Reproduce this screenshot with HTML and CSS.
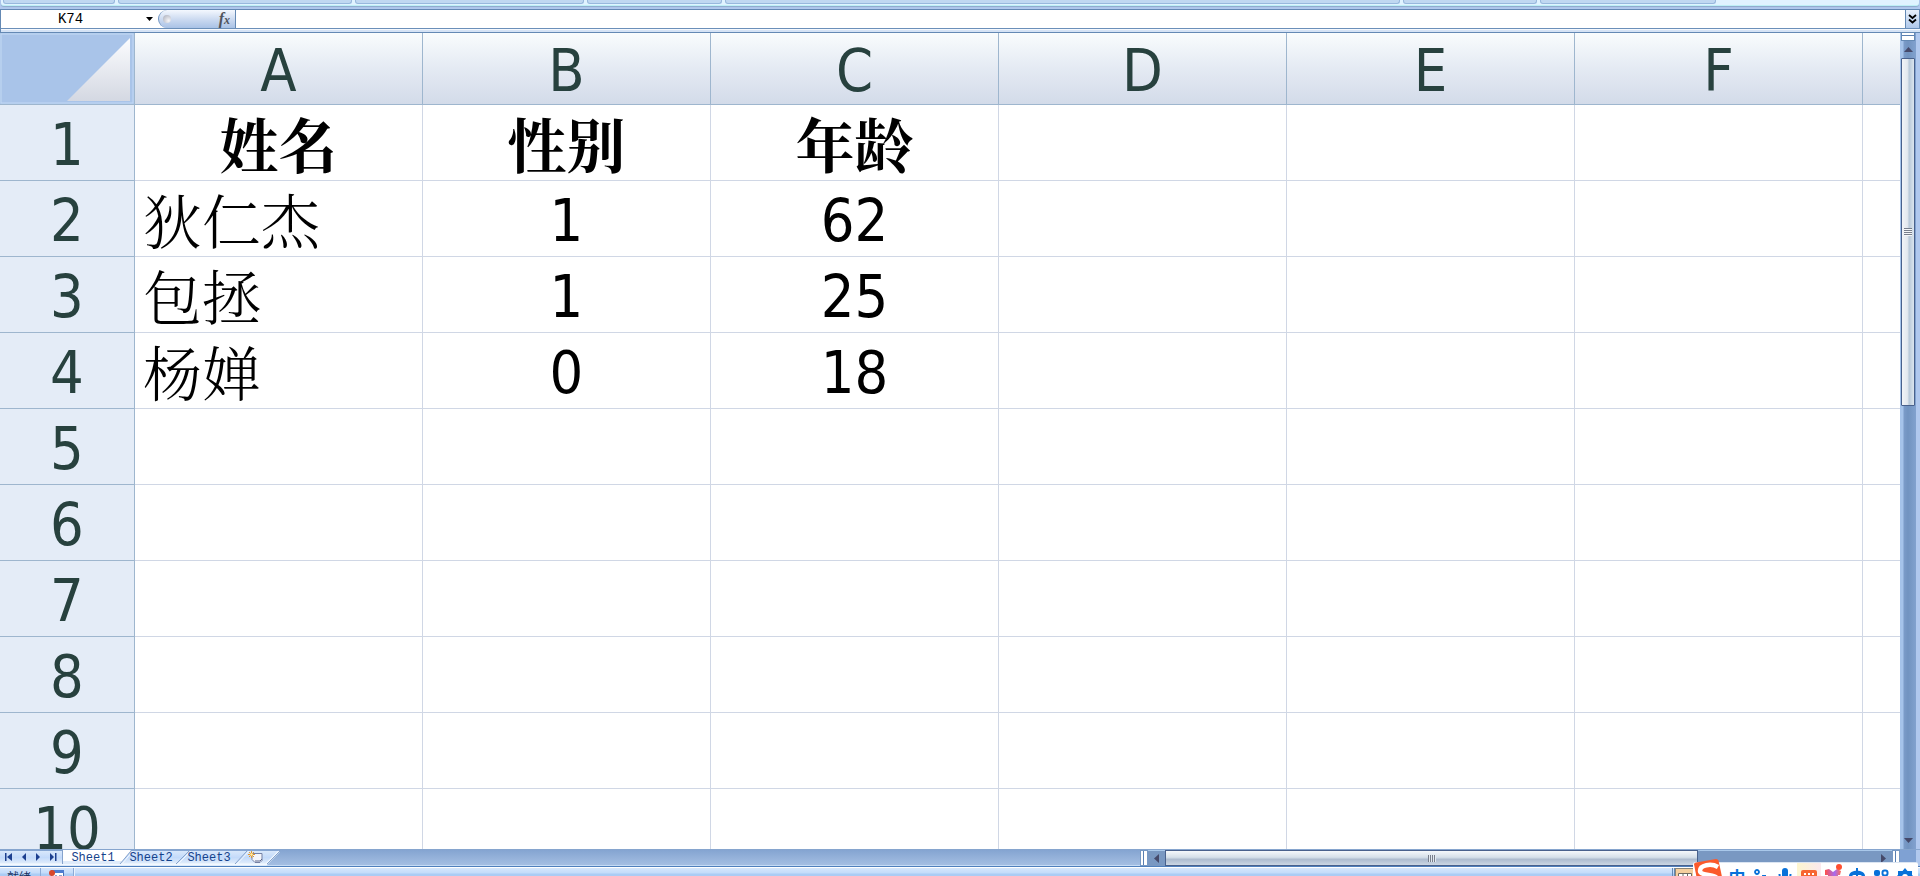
FILE: index.html
```html
<!DOCTYPE html>
<html lang="zh-CN">
<head>
<meta charset="utf-8">
<title>Sheet1</title>
<link rel="stylesheet" href="styles.css">
</head>
<body>
<header class="ribbon">
  <div class="group g-1"></div><div class="group g-2"></div><div class="group g-3"></div><div class="group g-4"></div><div class="group g-5"></div><div class="group g-6"></div><div class="group g-7"></div>
</header>
<div class="formula-bar">
  <input class="name-box" type="text" value="K74" aria-label="Name box">
  <button class="name-drop" aria-label="Names"><svg width="7" height="4" viewBox="0 0 7 4"><path d="M0 0h7L3.500 4z"/></svg></button>
  <div class="fx-area">
    <span class="knob"></span>
    <button class="fx" aria-label="Insert function"><i>f</i><i class="fx-x">x</i></button>
  </div>
  <input class="formula" type="text" aria-label="Formula">
  <button class="expand" aria-label="Expand formula bar"><svg width="9" height="10" viewBox="0 0 9 10"><path d="M1 1l3.500 3L8 1M1 5.500l3.500 3L8 5.500" fill="none" stroke="#000" stroke-width="1.800"/></svg></button>
</div>
<main class="workspace">
  <div class="sheet">
    <table class="grid">
      <colgroup><col class="col-head"><col class="col"><col class="col"><col class="col"><col class="col"><col class="col"><col class="col"><col></colgroup>
      <thead>
        <tr>
          <th class="corner"><svg viewBox="0 0 134 71" width="134" height="71"><defs><linearGradient id="tri" x1="0" y1="0" x2="0" y2="1"><stop offset="0" stop-color="#fbfcfe"/><stop offset="1" stop-color="#d4d8e2"/></linearGradient></defs><rect x="1" y="1" width="132" height="69" fill="#a9c4e9" stroke="#c3d9f4" stroke-width="1"/><path d="M130 5v63H67z" fill="url(#tri)"/></svg></th>
          <th>A</th><th>B</th><th>C</th><th>D</th><th>E</th><th>F</th><th></th>
        </tr>
      </thead>
      <tbody>
        <tr class="titles"><th>1</th><td>姓名</td><td>性别</td><td>年龄</td><td></td><td></td><td></td><td></td></tr>
        <tr><th>2</th><td class="name">狄仁杰</td><td>1</td><td>62</td><td></td><td></td><td></td><td></td></tr>
        <tr><th>3</th><td class="name">包拯</td><td>1</td><td>25</td><td></td><td></td><td></td><td></td></tr>
        <tr><th>4</th><td class="name">杨婵</td><td>0</td><td>18</td><td></td><td></td><td></td><td></td></tr>
        <tr><th>5</th><td></td><td></td><td></td><td></td><td></td><td></td><td></td></tr>
        <tr><th>6</th><td></td><td></td><td></td><td></td><td></td><td></td><td></td></tr>
        <tr><th>7</th><td></td><td></td><td></td><td></td><td></td><td></td><td></td></tr>
        <tr><th>8</th><td></td><td></td><td></td><td></td><td></td><td></td><td></td></tr>
        <tr><th>9</th><td></td><td></td><td></td><td></td><td></td><td></td><td></td></tr>
        <tr><th>10</th><td></td><td></td><td></td><td></td><td></td><td></td><td></td></tr>
      </tbody>
    </table>
  </div>
  <div class="vscroll">
    <div class="v-split"></div>
    <button class="v-btn" aria-label="Scroll up"><svg width="9" height="5" viewBox="0 0 9 5"><path d="M0 5h9L4.500 0z"/></svg></button>
    <div class="v-track"><div class="v-thumb"><span class="v-grip"></span></div></div>
    <button class="v-btn" aria-label="Scroll down"><svg width="9" height="5" viewBox="0 0 9 5"><path d="M0 0h9L4.500 5z"/></svg></button>
  </div>
</main>
<div class="tab-row">
  <nav class="tabs">
    <svg class="tabs-art" width="282" height="16" viewBox="0 0 282 16" aria-hidden="true">
      <defs><linearGradient id="tab" x1="0" y1="0" x2="0" y2="1"><stop offset="0" stop-color="#d9e8fb"/><stop offset=".5" stop-color="#c3dafa"/><stop offset="1" stop-color="#e3eefb"/></linearGradient></defs>
      <path d="M0 1h279l-13 13H0z" fill="url(#tab)"/>
      <path d="M0 14.500h266l13-13" fill="none" stroke="#f4f9ff" stroke-width="2"/>
      <path d="M63 0h68l-11 14H63z" fill="#fff"/>
      <path d="M63 11h59l-2 3H63z" fill="#dfebfa"/>
      <path d="M62.500 0v14M131 1l-11 13M189 1l-13 13M247 1l-12 13M280 1l-13 13" fill="none" stroke="#86a3cc"/>
      <path d="M133 1l-11 13M191 1l-13 13M249 1l-12 13" fill="none" stroke="#f2f8ff"/>
    </svg>
    <div class="tab-nav">
      <button aria-label="First sheet"><svg width="8" height="8" viewBox="0 0 8 8"><path d="M0 0h1.500v8H0zM7 0v8L2 4z"/></svg></button>
      <button aria-label="Previous sheet"><svg width="8" height="8" viewBox="0 0 8 8"><path d="M6 0v8L2 4z"/></svg></button>
      <button aria-label="Next sheet"><svg width="8" height="8" viewBox="0 0 8 8"><path d="M2 0v8l4-4z"/></svg></button>
      <button aria-label="Last sheet"><svg width="8" height="8" viewBox="0 0 8 8"><path d="M6 0h1.500v8H6zM1 0v8l4-4z"/></svg></button>
    </div>
    <button class="tab">Sheet1</button>
    <button class="tab">Sheet2</button>
    <button class="tab">Sheet3</button>
    <button class="new-tab" aria-label="Insert sheet"><svg width="15" height="13" viewBox="0 0 15 13"><path d="M4 2.500h10v7l-2 2H7l-3-3z" fill="#f3f5fb" stroke="#7581a5"/><path d="M7 10h5l2-2" fill="none" stroke="#5c678c"/><path d="M3.500 0v7M0 3.500h7M1 1l5 5M6 1L1 6" stroke="#e59a2f"/><circle cx="3.500" cy="3.500" r="1.200" fill="#fff3b0"/></svg></button>
  </nav>
  <div class="hscroll">
    <div class="h-split"></div>
    <button class="h-btn" aria-label="Scroll left"><svg width="5" height="9" viewBox="0 0 5 9"><path d="M5 0v9L0 4.500z"/></svg></button>
    <div class="h-track"><div class="h-thumb"><span class="h-grip"></span></div></div>
    <button class="h-btn" aria-label="Scroll right"><svg width="5" height="9" viewBox="0 0 5 9"><path d="M0 0v9l5-4.500z"/></svg></button>
    <div class="h-split"></div>
  </div>
  <div class="size-box"></div>
</div>
<footer class="status">
  <span class="ready">就绪</span>
  <button class="macro" aria-label="Record macro"><svg width="16" height="14" viewBox="0 0 16 14"><rect x="2.500" y=".5" width="12" height="13" fill="#fff" stroke="#4b6fb3"/><path d="M2 0h13v3H2z" fill="#4d7cd0"/><path d="M6 5h2v2H6zM10 5h3v2h-3z" fill="#8fa6cf"/><circle cx="3" cy="3" r="3" fill="#d9472b"/></svg></button>
  <div class="status-fill"></div>
  <button class="view" aria-label="Normal view"><svg width="14" height="10" viewBox="0 0 14 10"><path d="M.5.500h13v9H.5zM.5 4.500h13M5 0v9M9.500 0v9" fill="#fff" stroke="#6f6a62"/></svg></button>
  <div class="view-rest"></div>
</footer>
<aside class="ime">
  <svg class="ime-logo" width="32" height="32" viewBox="0 0 32 32" aria-hidden="true"><path d="M1 5q0-1 2-1.500L23 0q2 0 2.500 1.500L31 27 6 31z" fill="#fb5a2b"/><path d="M25 8C18 4 7 6 7 12c0 5 17 3 17 8 0 4-9 5-15 2" fill="none" stroke="#fff" stroke-width="4.500"/></svg>
  <button class="ime-lang">中</button>
  <button aria-label="Punctuation"><svg width="18" height="18" viewBox="0 0 18 18"><circle cx="5" cy="4" r="2" fill="none" stroke="#0871d9" stroke-width="1.800"/><path d="M10 7h4v3l-3 4" fill="#0871d9"/></svg></button>
  <button aria-label="Voice"><svg width="18" height="18" viewBox="0 0 18 18"><rect x="6" y="0" width="6" height="10" rx="3" fill="#0871d9"/><path d="M3.500 6c0 8 11 8 11 0M9 12v4" fill="none" stroke="#0871d9" stroke-width="2"/></svg></button>
  <button class="ime-keys" aria-label="Keyboard"><svg width="18" height="18" viewBox="0 0 18 18"><rect x="1" y="2" width="16" height="14" rx="2" fill="#f76532"/><path d="M4 5h2v2H4zM8 5h2v2H8zM12 5h2v2h-2zM4 8h2v2H4zM8 8h2v2H8zM12 8h2v2h-2zM5 12h8v2H5z" fill="#fff"/></svg></button>
  <button aria-label="Skin"><svg class="skin" width="18" height="20" viewBox="0 0 18 20"><defs><linearGradient id="skin"><stop offset="0" stop-color="#ff5148"/><stop offset=".6" stop-color="#a66bf0"/><stop offset="1" stop-color="#ff6a55"/></linearGradient></defs><path d="M1 6l4-1 4 3 4-3 4 2-1 4h-2v8H4v-8H1z" fill="url(#skin)"/><circle cx="15" cy="3" r="3" fill="#ff5030"/></svg></button>
  <button aria-label="Assistant"><svg width="18" height="18" viewBox="0 0 18 18"><path d="M8 0h2v3H8z" fill="#0871d9"/><path d="M1 8c0-7 16-7 16 0v4c-1 5-15 5-16 0z" fill="#0871d9"/><rect x="4" y="7" width="10" height="5" rx="2" fill="#fff"/><path d="M8 4h2v5H8z" fill="#0871d9"/></svg></button>
  <button aria-label="Toolbox"><svg width="18" height="18" viewBox="0 0 18 18"><rect x="2" y="2" width="6" height="6" rx="2" fill="#0871d9"/><rect x="10.500" y="2.500" width="5" height="5" rx="2" fill="none" stroke="#0871d9" stroke-width="2"/><rect x="2" y="10" width="6" height="6" rx="2" fill="#0871d9"/><rect x="10" y="10" width="6" height="6" rx="2" fill="#0871d9"/></svg></button>
  <button aria-label="Settings"><svg width="18" height="18" viewBox="0 0 18 18"><path d="M9 0l2.500 3H16v4l2 2-2 2v4h-4l-3 3-3-3H2v-4L0 9l2-2V3h4.500z" fill="#0871d9"/><circle cx="9" cy="9" r="3" fill="#fff"/></svg></button>
</aside>
</body>
</html>
```
FILE: styles.css
```css
* { box-sizing: border-box; }
body {
  margin: 0;
  height: 100vh;
  display: flex;
  flex-direction: column;
  position: relative;
  overflow: hidden;
  background: #b0c8ee;
  font-family: "Liberation Sans", "Noto Sans CJK SC", sans-serif;
}
button, input { margin: 0; padding: 0; border: 0; background: none; border-radius: 0; outline: 0; }
button { display: flex; align-items: center; justify-content: center; }
svg { display: block; flex: none; }

.ribbon {
  flex: 0 0 6px;
  margin: 0 1px 3px;
  padding: 0 2px 1px;
  display: flex;
  gap: 3px;
  background: #e0f3ff;
  border-bottom: 1px solid #bdf0f6;
  border-radius: 0 0 3px 3px;
  box-shadow: 0 1px 1px #8ea9ca;
}
.group { background: #c0d8f1; border: 1px solid #98b8dc; border-top: 0; border-radius: 0 0 3px 3px; height: 4px; }
.g-1 { width: 112px; }
.g-2 { width: 234px; }
.g-3 { width: 229px; }
.g-4 { width: 135px; }
.g-5 { width: 675px; }
.g-6 { width: 134px; }
.g-7 { width: 176px; }

.formula-bar {
  flex: 0 0 24px;
  display: flex;
  height: 24px;
  background: linear-gradient(#fff 0 18px, #6b8fb9 18px 19px, #f4f8fe 19px 20px, #d5e3f5 20px);
  border: 1px solid #6489b4;
  border-width: 1px 0 1px 1px;
  padding-bottom: 4px;
}
.name-box { width: 139px; height: 18px; text-align: center; font: 14px/18px "Liberation Mono", monospace; color: #000; }
.name-drop { width: 18px; height: 18px; }
.fx-area {
  width: 78px;
  height: 18px;
  display: flex;
  align-items: center;
  justify-content: space-between;
  padding: 0 5px 0 4px;
  background: linear-gradient(#f4f8fe, #cddbf1 50%, #a9c2e6);
  border-left: 1px solid #6f94c2;
  border-right: 1px solid #6489b4;
  border-radius: 9px 0 0 9px;
}
.knob { width: 8px; height: 8px; border-radius: 50%; background: radial-gradient(circle at 70% 70%, #f5f5f8, #a7abb8); }
.fx { font: bold 16px/16px "Liberation Serif", serif; color: #50545c; }
.fx-x { font-size: 12px; padding-top: 2px; }
.formula { flex: 1; height: 18px; }
.expand { width: 15px; height: 18px; background: linear-gradient(#e8f0fb, #afc8ea); border: 1px solid #6489b4; border-width: 0 1px 0 1px; }

.workspace { flex: 1; min-height: 0; display: flex; padding-right: 4px; }
.sheet { flex: 1; min-width: 0; overflow: hidden; background: #fff; }
.grid { width: 100%; table-layout: fixed; border-collapse: separate; border-spacing: 0; }
.col-head { width: 135px; }
.col { width: 288px; }
.grid th, .grid td {
  height: 76px;
  padding: 4px 0 0;
  border: solid #d0d7e5;
  border-width: 0 1px 1px 0;
  font: 59px/71px "DejaVu Sans Condensed", "Noto Sans", "Noto Sans CJK SC", sans-serif;
  text-align: center;
  white-space: nowrap;
  color: #000;
}
.grid th { color: #27413e; background: #e4ecf7; border-color: #9eb6ce; }
.grid thead th { height: 72px; line-height: 67px; background: linear-gradient(#f9fcfd, #e4eaf3 50%, #d3dbe9); }
.grid thead .corner { padding: 0; background: #a9c4e9; }
.grid td:last-child, .grid th:last-child { border-right: 0; }
.grid .titles td, .grid .name {
  padding-top: 0;
  font-family: "SimSun", "Noto Serif CJK SC", "Noto Sans CJK SC", serif;
}
.grid .titles td { font-weight: 700; }
.grid .name { font-weight: 300; text-align: left; padding-left: 8px; }

.vscroll {
  width: 16px;
  display: flex;
  flex-direction: column;
  background: linear-gradient(90deg, #a5c3ea 0 3px, #7b9bc8 4px, #7193c0 50%, #82a2cf);
  fill: #45496a;
}
.v-split { height: 8px; margin: 0 1px; background: linear-gradient(#fff 0 2px, #5a80b2 2px 3px, #fff 3px); border: 1px solid #6489b4; border-top: 0; }
.v-btn { height: 17px; }
.v-track { flex: 1; display: flex; flex-direction: column; }
.v-thumb { height: 45%; margin: 0 1px; display: flex; align-items: center; justify-content: center; border: 1px solid #49618c; border-radius: 1px; background: linear-gradient(90deg, #f2f4f7, #e3e8ee 45%, #b9c9d9 60%, #dce6ef); }
.v-grip { width: 8px; height: 8px; background: repeating-linear-gradient(#777e8b 0 1px, #f4f6f8 1px 2px); }

.tab-row { flex: 0 0 17px; display: flex; padding-bottom: 1px; border-top: 1px solid #86a5ce; background: #4f7fbc; }
.tabs { position: relative; width: 59.400%; display: flex; background: linear-gradient(#84a4d1, #a4bee2); border-bottom: 1px solid #c5dbf5; }
.tabs-art { position: absolute; left: 0; top: 0; }
.tab-nav { position: relative; width: 62px; display: flex; justify-content: space-between; padding: 0 5px 1px; fill: #1c3f8f; }
.tab { position: relative; width: 58px; padding: 1px 0 0 4px; font: 12px/14px "Liberation Mono", monospace; color: #15428b; }
.new-tab { position: relative; width: 38px; }
.hscroll { flex: 1; display: flex; background: linear-gradient(#a9c8ea 0 1px, #7998c2 1px); fill: #45496a; }
.h-split { width: 8px; background: linear-gradient(90deg, #fff 0 2px, #5a80b2 2px 3px, #fff 3px); border: 1px solid #7799c4; }
.h-btn { width: 17px; }
.h-track { flex: 1; display: flex; }
.h-thumb { width: 75%; display: flex; align-items: center; justify-content: center; border: 1px solid #49618c; background: linear-gradient(#f5f8fb, #d5dfe9 45%, #aebccf 60%, #ccd7e4); }
.h-grip { width: 8px; height: 7px; background: repeating-linear-gradient(90deg, #777e8b 0 1px, #e3e9f0 1px 2px); }
.size-box { width: 20px; background: linear-gradient(90deg, #7fa1d3 0 16px, #b0c8ee 16px); }

.status { flex: 0 0 9px; display: flex; overflow: hidden; border-top: 1px solid #fff; background: linear-gradient(#d6e6fb, #c3dcfa 5px, #abccf4 6px); }
.ready { width: 41px; padding: 2px 0 0 7px; height: 24px; border-right: 1px solid #8baad6; font: 12px/14px "Noto Sans CJK SC", sans-serif; color: #15305f; }
.macro { width: 33px; height: 18px; border-right: 1px solid #8baad6; }
.status-fill { flex: 1; border-left: 1px solid #e9f2fd; border-right: 3px double #6489b4; }
.view { width: 19px; height: 18px; padding-top: 2px; background: #f5cf9e; border: 1px solid #8a8577; }
.view-rest { width: 226px; }

.ime { position: absolute; right: 2px; bottom: -12px; height: 26px; width: 225px; display: flex; padding-left: 32px; background: #fff; border-top: 1px solid #dbe5f2; border-radius: 2px 2px 0 0; }
.ime::before { content: ""; }
.ime-logo { position: absolute; left: 0; top: -4px; }
.ime button { width: 24px; padding-top: 5px; align-items: flex-start; }
.ime .ime-lang { padding-top: 4px; font: bold 17px/20px "Noto Sans CJK SC", sans-serif; color: #0871d9; }
.ime .ime-keys { background: linear-gradient(90deg, #fdf6cf, #fbe9ee); }
.ime .skin { margin-top: -4px; }
```
